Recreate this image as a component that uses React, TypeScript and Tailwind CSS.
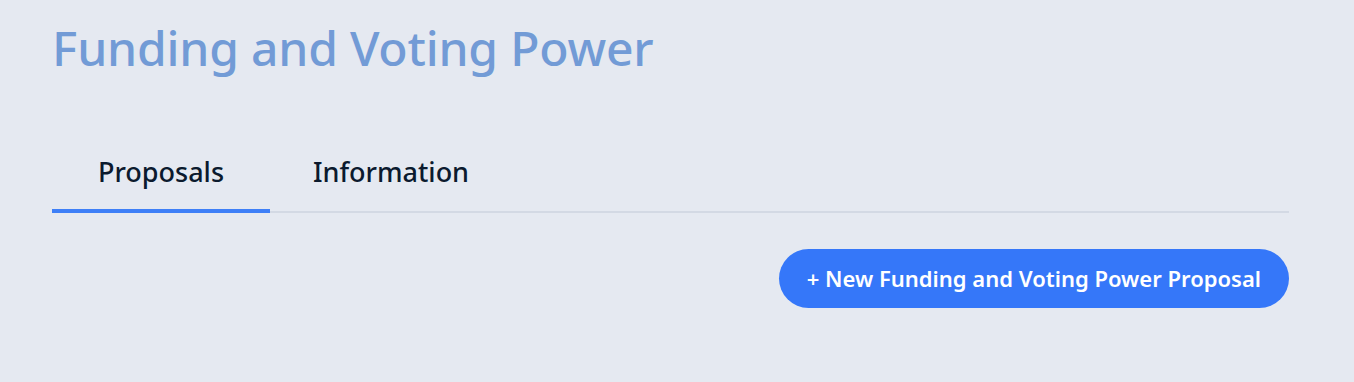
export default function App() {
  return (
    <div className="min-h-[382px] w-full bg-[#e5e9f1]" style={{ fontFamily: '"Noto Sans", sans-serif' }}>
      <div className="w-[1237px] ml-[52px] pt-[18px]">
        <h1 className="text-[48px] leading-[60px] font-medium text-[#729bd6] tracking-[-0.2px]">Funding and Voting Power</h1>
        <div className="mt-[70px] flex border-b-2 border-[#d3d9e4]">
          <button className="w-[218px] h-[65px] -mb-[2px] border-b-4 border-[#3e7ff7] text-[27px] font-medium text-[#0b1a2e] pb-[12px]">Proposals</button>
          <button className="w-[242px] h-[65px] -mb-[2px] border-b-4 border-transparent text-[27px] font-medium text-[#0b1a2e] pb-[12px]">Information</button>
        </div>
        <div className="flex justify-end mt-[36px]">
          <button className="h-[59px] px-[28px] rounded-full bg-[#3577f9] text-white text-[22px] font-semibold">+ New Funding and Voting Power Proposal</button>
        </div>
      </div>
    </div>
  );
}
